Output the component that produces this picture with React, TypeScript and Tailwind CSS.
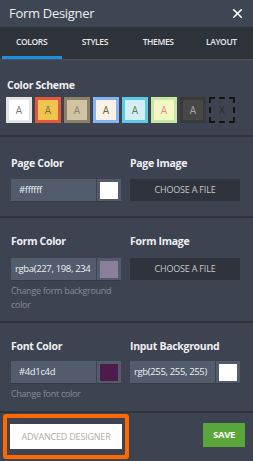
import { X } from 'lucide-react'

const font = { fontFamily: '"Open Sans", "Noto Sans", sans-serif' }

const swatches = [
  { border: 'border-[#e4e4e4]', bg: 'bg-white', text: 'text-[#777777]' },
  { border: 'border-[#e4573a]', bg: 'bg-[#efc552]', text: 'text-[#8a6a2a]' },
  { border: 'border-[#8c826c]', bg: 'bg-[#d2c3a3]', text: 'text-[#8c826c]' },
  { border: 'border-[#86b3f2]', bg: 'bg-[#f8f3e6]', text: 'text-[#5d6b3a]' },
  { border: 'border-[#5ccbe3]', bg: 'bg-[#d4eef3]', text: 'text-[#5d7a5a]' },
  { border: 'border-[#c9e6a2]', bg: 'bg-[#f1f8c4]', text: 'text-[#f07f9a]' },
  { border: 'border-[#3a3a3a]', bg: 'bg-[#474747]', text: 'text-[#a8a8a8]' },
]

function ColorInput({ value, color, pad = 'pl-[8px]' }: { value: string; color: string; pad?: string }) {
  return (
    <div className="flex h-[23px] w-[110px]">
      <div className={`w-[85px] bg-[#525c6c] flex items-center ${pad} text-[9.5px] tracking-[-0.35px] text-[#eef0f3] overflow-hidden whitespace-nowrap border-b border-[#363b44]`}>
        {value}
      </div>
      <div className="flex-1 bg-[#525c6c] ml-px flex items-center justify-center border-b border-[#363b44]">
        <div className="w-[18px] h-[17px]" style={{ background: color }} />
      </div>
    </div>
  )
}

function FileButton() {
  return (
    <div className="w-[110px] h-[22px] bg-[#2f343c] flex items-center justify-center text-[9px] tracking-[-0.2px] text-[#c3c7cd]">
      CHOOSE A FILE
    </div>
  )
}

export default function App() {
  return (
    <div className="w-[253px] h-[461px] bg-[#3d4350] overflow-hidden flex flex-col" style={font}>
      <div className="h-[27px] bg-[#3f4653] flex items-center justify-between pl-[9px] pr-[8px]">
        <span className="text-[13px] tracking-[-0.3px] text-[#eceef1]">Form Designer</span>
        <X className="w-[15px] h-[15px] text-white" strokeWidth={2.6} />
      </div>

      <div className="h-[33px] bg-[#2e333a] grid grid-cols-4 relative border-b border-[#4a515d]">
        {['COLORS', 'STYLES', 'THEMES', 'LAYOUT'].map((t) => (
          <div key={t} className="flex items-center justify-center text-[8.5px] font-semibold text-[#e6e8eb] tracking-[-0.4px] pb-[1px]">
            {t}
          </div>
        ))}
        <div className="absolute left-[2px] bottom-0 w-[60px] h-[3px] bg-[#1d8fe0]" />
      </div>

      <div className="h-[77px] border-b-2 border-[#30353d] pl-[6px] pt-[18px]">
        <div className="text-[10.5px] font-bold tracking-[-0.3px] text-[#eef0f3] pl-px leading-[14px]">Color Scheme</div>
        <div className="flex gap-[3px] mt-[5px]">
          {swatches.map((s, i) => (
            <div key={i} className={`w-[26px] h-[26px] border-[3px] ${s.border} ${s.bg} flex items-center justify-center text-[10px] ${s.text}`}>
              A
            </div>
          ))}
          <div className="w-[26px] h-[26px] border-2 border-dashed border-[#151515] flex items-center justify-center text-[10px] text-[#2a2d33]">
            X
          </div>
        </div>
      </div>

      <div className="h-[81px] border-b-2 border-[#30353d] pl-[11px] pt-[19px] flex gap-[9px]">
        <div className="w-[110px]">
          <div className="text-[10.5px] font-bold tracking-[-0.3px] text-[#eef0f3] leading-[14px] mb-[9px]">Page Color</div>
          <ColorInput value="#ffffff" color="#ffffff" />
        </div>
        <div className="w-[110px]">
          <div className="text-[10.5px] font-bold tracking-[-0.3px] text-[#eef0f3] leading-[14px] mb-[9px]">Page Image</div>
          <FileButton />
        </div>
      </div>

      <div className="h-[105px] border-b-2 border-[#30353d] pl-[11px] pt-[16px] flex gap-[9px]">
        <div className="w-[110px]">
          <div className="text-[10.5px] font-bold tracking-[-0.3px] text-[#eef0f3] leading-[14px] mb-[10px]">Form Color</div>
          <ColorInput value="rgba(227, 198, 234" color="#8a809b" pad="pl-[4px]" />
          <div className="text-[9px] tracking-[-0.3px] text-[#868d98] leading-[14px] mt-[3px]">
            Change form background color
          </div>
        </div>
        <div className="w-[110px]">
          <div className="text-[10.5px] font-bold tracking-[-0.3px] text-[#eef0f3] leading-[14px] mb-[10px]">Form Image</div>
          <FileButton />
        </div>
      </div>

      <div className="h-[90px] border-b-2 border-[#30353d] pl-[11px] pt-[16px] flex gap-[9px]">
        <div className="w-[110px]">
          <div className="text-[10.5px] font-bold tracking-[-0.3px] text-[#eef0f3] leading-[14px] mb-[8px]">Font Color</div>
          <ColorInput value="#4d1c4d" color="#4d1c4d" />
          <div className="text-[9px] tracking-[-0.3px] text-[#868d98] leading-[14px] mt-[3px]">Change font color</div>
        </div>
        <div className="w-[110px]">
          <div className="text-[10.5px] font-bold tracking-[-0.3px] text-[#eef0f3] leading-[14px] mb-[8px]">Input Background</div>
          <ColorInput value="rgb(255, 255, 255)" color="#ffffff" pad="pl-[4px]" />
        </div>
      </div>

      <div className="flex-1 flex items-start justify-between pl-[3px] pr-[8px] pt-[1px]">
        <div className="w-[126px] h-[45px] border-[4px] border-[#ff6a00] rounded-[3px] flex items-center">
          <div className="w-[112px] h-[25px] bg-white flex items-center justify-center text-[9px] text-[#b5aaa0] tracking-[-0.2px] ml-[3px]">
            ADVANCED DESIGNER
          </div>
        </div>
        <div className="mt-[9px] w-[42px] h-[24px] bg-[#5ba63a] flex items-center justify-center text-[9.5px] font-bold tracking-[-0.3px] text-white">
          SAVE
        </div>
      </div>
    </div>
  )
}
